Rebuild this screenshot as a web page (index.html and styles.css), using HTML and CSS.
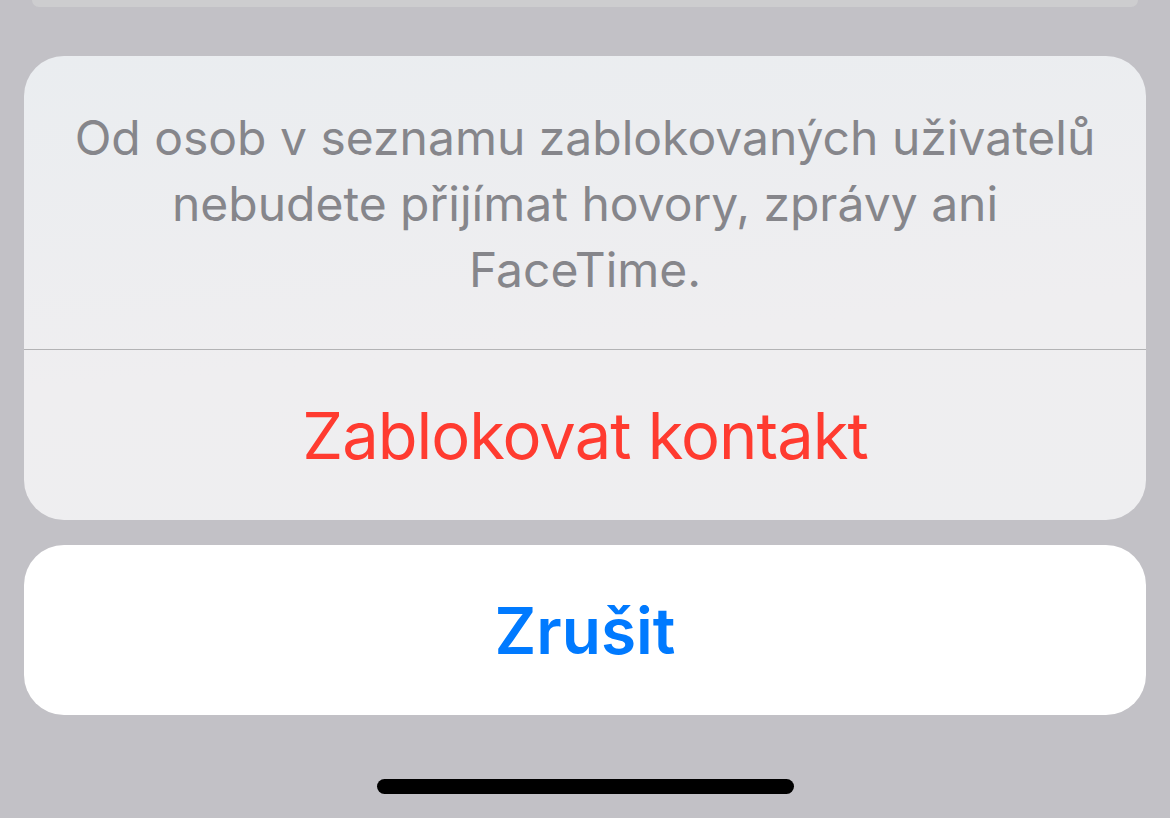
FILE: index.html
```html
<!DOCTYPE html>
<html lang="cs">
<head>
<meta charset="utf-8">
<link rel="stylesheet" href="styles.css">
</head>
<body>
<div class="screen">
  <div class="top-card"></div>
  <div class="sheet">
    <div class="group">
      <p class="message">Od osob v seznamu zablokovaných uživatelů nebudete přijímat hovory, zprávy ani FaceTime.</p>
      <div class="action destructive">Zablokovat kontakt</div>
    </div>
    <div class="cancel">Zrušit</div>
  </div>
  <div class="home-indicator"></div>
</div>
</body>
</html>
```
FILE: styles.css
```css
html, body {
  margin: 0;
  padding: 0;
  background: #c2c1c6;
}
.screen {
  width: 1170px;
  height: 818px;
  display: flex;
  flex-direction: column;
  align-items: center;
  font-family: Inter, "Noto Sans", sans-serif;
  overflow: hidden;
}
.top-card {
  width: 1106px;
  height: 7px;
  background: #cdcdcf;
  border-radius: 0 0 14px 14px;
}
.sheet {
  margin-top: 49px;
  width: 1122px;
  display: flex;
  flex-direction: column;
  gap: 25px;
}
.group {
  background: linear-gradient(175deg, #eaedf0 0%, #efeef0 60%, #eeeef0 100%);
  border-radius: 40px;
  overflow: hidden;
}
.message {
  margin: 0;
  padding: 49px 40px 46px;
  text-align: center;
  font-size: 48px;
  line-height: 66px;
  color: #86868b;
  border-bottom: 1px solid #b3b3b5;
}
.action {
  height: 170px;
  display: flex;
  align-items: center;
  justify-content: center;
  font-size: 65px;
  letter-spacing: -0.95px;
}
.destructive {
  color: #ff3b30;
}
.cancel {
  height: 170px;
  background: #ffffff;
  border-radius: 40px;
  display: flex;
  align-items: center;
  justify-content: center;
  font-size: 64px;
  font-weight: 600;
  color: #007aff;
}
.home-indicator {
  margin-top: 64px;
  width: 417px;
  height: 15px;
  border-radius: 8px;
  background: #000;
}
```
